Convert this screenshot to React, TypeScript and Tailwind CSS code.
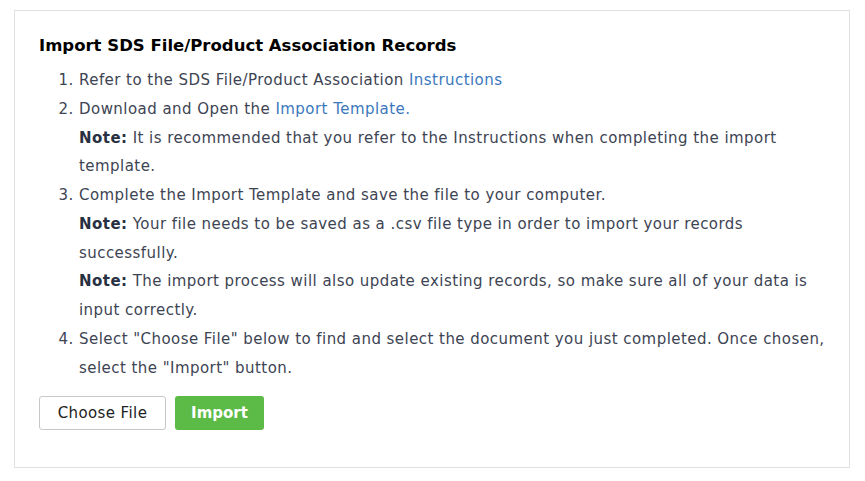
import React from "react";

export default function App() {
  const font = { fontFamily: "'DejaVu Sans', sans-serif" };
  const note = "font-bold text-[#283142]";
  return (
    <div className="w-[865px] h-[481px] bg-white pt-[10px] pl-[14px]" style={font}>
      <div className="w-[836px] h-[458px] border border-[#e1e1e1] pt-[23px] pl-[24px] pr-[20px]">
        <h2 className="text-[16.5px] leading-[24px] font-bold text-black">Import SDS File/Product Association Records</h2>
        <ol className="list-decimal pl-[40px] mt-[8px] text-[15px] leading-[28.75px] tracking-[0.45px] text-[#3d4453] marker:text-[#3d4453]">
          <li>
            Refer to the SDS File/Product Association <a className="text-[#3b78bd]">Instructions</a>
          </li>
          <li>
            Download and Open the <a className="text-[#3b78bd]">Import Template.</a>
            <div>
              <span className={note}>Note:</span> It is recommended that you refer to the Instructions when completing the import template.
            </div>
          </li>
          <li>
            Complete the Import Template and save the file to your computer.
            <div>
              <span className={note}>Note:</span> Your file needs to be saved as a .csv file type in order to import your records successfully.
            </div>
            <div>
              <span className={note}>Note:</span> The import process will also update existing records, so make sure all of your data is input correctly.
            </div>
          </li>
          <li>
            Select "Choose File" below to find and select the document you just completed. Once chosen, select the "Import" button.
          </li>
        </ol>
        <div className="flex gap-[9px] mt-[14px]">
          <button className="w-[127px] h-[34px] border border-[#c8c8c8] rounded-[3px] bg-white text-[15px] tracking-[0.4px] text-[#222]">Choose File</button>
          <button className="w-[89px] h-[34px] rounded-[3px] bg-[#5cba47] text-white font-bold text-[15px]">Import</button>
        </div>
      </div>
    </div>
  );
}
